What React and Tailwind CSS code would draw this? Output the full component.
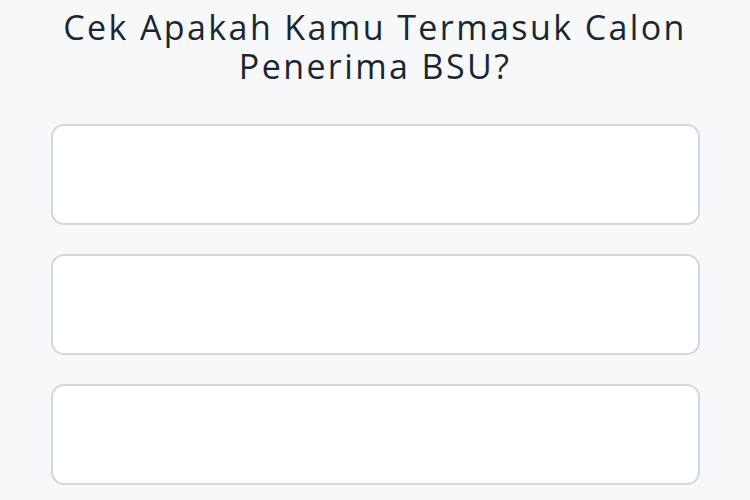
export default function App() {
  return (
    <div className="w-[750px] h-[500px] bg-[#f7f8fa] overflow-hidden flex flex-col items-center">
      <h1 className="mt-[8px] text-center text-[34px] leading-[39px] font-normal text-[#1c2630] tracking-[2.4px]" style={{ fontFamily: '"Open Sans", sans-serif' }}>
        Cek Apakah Kamu Termasuk Calon
        <br />
        Penerima BSU?
      </h1>
      <div className="mt-[38px] w-[649px] ml-[1px] flex flex-col gap-[29px]">
        <div className="h-[101px] rounded-[13px] border-2 border-[#d3d8df] bg-white" />
        <div className="h-[101px] rounded-[13px] border-2 border-[#d3d8df] bg-white" />
        <div className="h-[101px] rounded-[13px] border-2 border-[#d3d8df] bg-white" />
      </div>
    </div>
  );
}
